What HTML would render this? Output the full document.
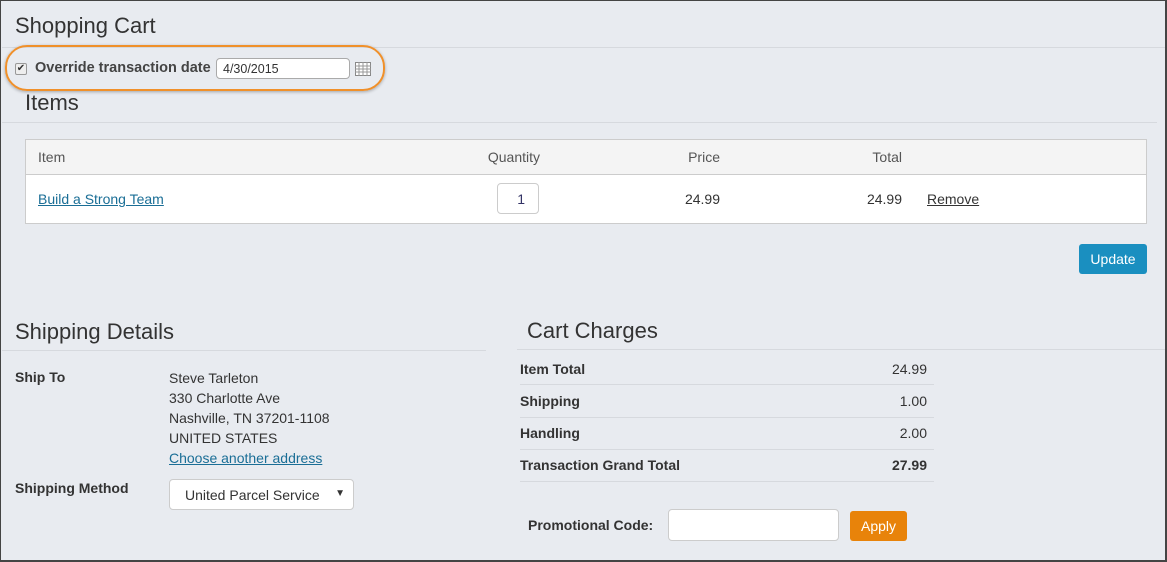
<!DOCTYPE html>
<html><head><meta charset="utf-8"><style>
*{box-sizing:border-box;margin:0;padding:0}
body{width:1167px;height:562px;background:#e8ebf0;font-family:"Liberation Sans",sans-serif;color:#333;position:relative;overflow:hidden;font-size:14px}
.frame{position:absolute;left:0;top:0;width:1167px;height:562px;border:1px solid #444;border-right:2px solid #444;border-bottom:2px solid #444}
.a{position:absolute;white-space:nowrap}
.h{font-size:22px;color:#333}
.line{position:absolute;height:1px;background:#d6d9de}
.b{font-weight:bold}
a{color:#1a6e96;text-decoration:underline}
.r{text-align:right}
</style></head><body>
<div class="frame"></div>
<div class="a h" style="left:15px;top:13px">Shopping Cart</div>
<div class="line" style="left:2px;top:47px;width:1163px"></div>
<div class="a" style="left:5px;top:45px;width:380px;height:46px;border:2px solid #f0902a;border-radius:22px;box-shadow:0 1px 3px rgba(0,0,0,.3)"></div>
<div class="a" style="left:15px;top:63px;width:12px;height:12px;border:1px solid #999;border-radius:2px;background:#eee;font-size:10px;line-height:10px;text-align:center">✔</div>
<div class="a b" style="left:35px;top:60px;font-size:14.5px;color:#444">Override transaction date</div>
<div class="a" style="left:216px;top:58px;width:134px;height:21px;background:#fff;border:1px solid #aaa;border-radius:4px;font-size:12.5px;padding:3px 6px">4/30/2015</div>
<svg class="a" style="left:355px;top:62px" width="16" height="14"><rect x="0.5" y="0.5" width="15" height="13" fill="#fff" stroke="#888"/><path d="M0 4h16M0 7h16M0 10h16M4 0v14M8 0v14M12 0v14" stroke="#999" stroke-width="1"/></svg>
<div class="a h" style="left:25px;top:90px">Items</div>
<div class="line" style="left:2px;top:122px;width:1155px"></div>
<div class="a" style="left:25px;top:139px;width:1122px;height:85px;border:1px solid #ccc;background:#fff"></div>
<div class="a" style="left:26px;top:140px;width:1120px;height:35px;background:#f4f4f4;border-bottom:1px solid #ccc"></div>
<div class="a" style="left:38px;top:149px;color:#555">Item</div>
<div class="a r" style="left:440px;top:149px;width:100px;color:#555">Quantity</div>
<div class="a r" style="left:620px;top:149px;width:100px;color:#555">Price</div>
<div class="a r" style="left:800px;top:149px;width:102px;color:#555">Total</div>
<a class="a" style="left:38px;top:191px">Build a Strong Team</a>
<div class="a r" style="left:497px;top:183px;width:42px;height:31px;border:1px solid #ccc;border-radius:4px;padding:7px 13px;color:#336">1</div>
<div class="a r" style="left:620px;top:191px;width:100px">24.99</div>
<div class="a r" style="left:800px;top:191px;width:102px">24.99</div>
<a class="a" style="left:927px;top:191px;color:#333">Remove</a>
<div class="a" style="left:1079px;top:244px;width:68px;height:30px;background:#1a8fc0;border-radius:3px;color:#fff;font-size:14px;text-align:center;line-height:30px">Update</div>
<div class="a h" style="left:15px;top:319px">Shipping Details</div>
<div class="line" style="left:2px;top:350px;width:484px"></div>
<div class="a h" style="left:527px;top:318px">Cart Charges</div>
<div class="line" style="left:517px;top:349px;width:648px"></div>
<div class="a b" style="left:15px;top:369px">Ship To</div>
<div class="a" style="left:169px;top:368px;line-height:20px">Steve Tarleton<br>330 Charlotte Ave<br>Nashville, TN 37201-1108<br>UNITED STATES<br><a>Choose another address</a></div>
<div class="a b" style="left:15px;top:480px">Shipping Method</div>
<div class="a" style="left:169px;top:479px;width:185px;height:31px;background:#fff;border:1px solid #ccc;border-radius:4px;padding:7px 15px">United Parcel Service<span style="position:absolute;right:8px;top:8px;font-size:10px">▼</span></div>
<div class="a b" style="left:520px;top:361px">Item Total</div><div class="a r" style="left:820px;top:361px;width:107px">24.99</div>
<div class="line" style="left:520px;top:384px;width:414px"></div>
<div class="a b" style="left:520px;top:393px">Shipping</div><div class="a r" style="left:820px;top:393px;width:107px">1.00</div>
<div class="line" style="left:520px;top:417px;width:414px"></div>
<div class="a b" style="left:520px;top:425px">Handling</div><div class="a r" style="left:820px;top:425px;width:107px">2.00</div>
<div class="line" style="left:520px;top:449px;width:414px"></div>
<div class="a b" style="left:520px;top:457px">Transaction Grand Total</div><div class="a r b" style="left:820px;top:457px;width:107px">27.99</div>
<div class="line" style="left:520px;top:481px;width:414px"></div>
<div class="a b" style="left:528px;top:517px">Promotional Code:</div>
<div class="a" style="left:668px;top:509px;width:171px;height:32px;background:#fff;border:1px solid #ccc;border-radius:4px"></div>
<div class="a" style="left:850px;top:511px;width:57px;height:30px;background:#e8830a;border-radius:3px;color:#fff;font-size:14px;text-align:center;line-height:30px">Apply</div>
</body></html>
